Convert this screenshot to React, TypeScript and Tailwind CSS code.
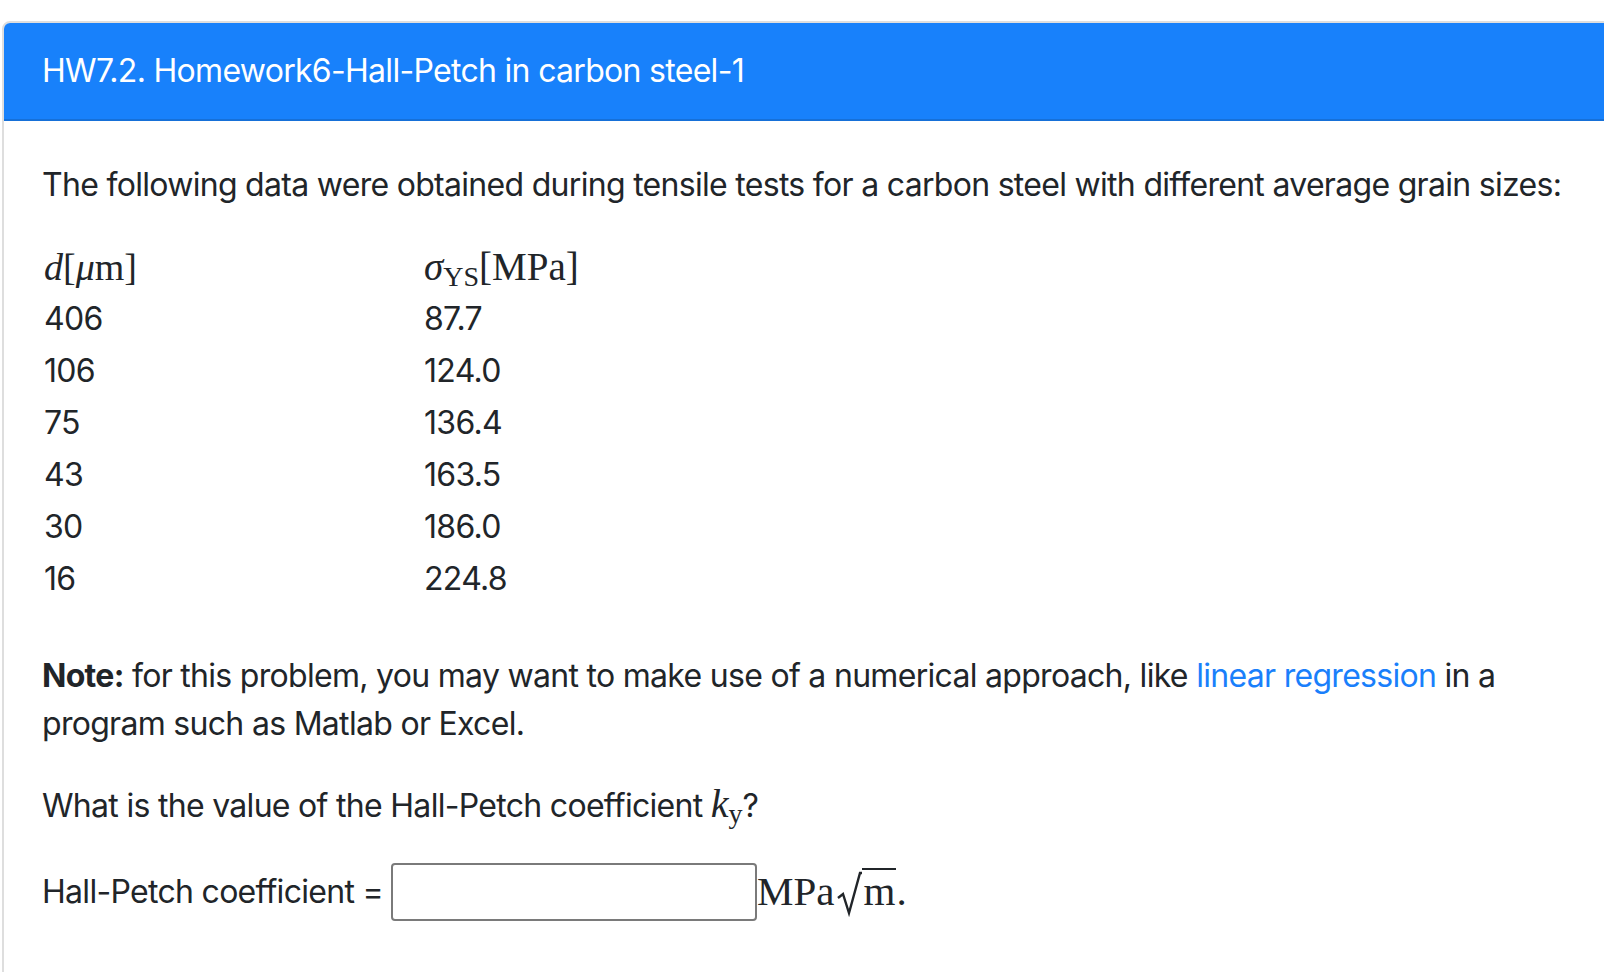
import React from 'react';

const rows: [string, string][] = [
  ['406', '87.7'],
  ['106', '124.0'],
  ['75', '136.4'],
  ['43', '163.5'],
  ['30', '186.0'],
  ['16', '224.8'],
];

const serif = "font-['Liberation_Serif','Times_New_Roman',serif] tracking-normal";

function Radical() {
  return (
    <svg width="26" height="46" viewBox="0 0 26 46" className="inline-block align-[-12px] ml-[2px]">
      <path d="M2 27 L7 23 L13 42 L24 2 L26 2" fill="none" stroke="#212529" strokeWidth="2.4" strokeLinejoin="miter" />
    </svg>
  );
}

export default function App() {
  return (
    <div className="w-full h-[972px] overflow-hidden bg-white pt-[21px] font-['Inter','Helvetica_Neue','Liberation_Sans',sans-serif] text-[32px] leading-[48px] tracking-[-0.7px] text-[#212529]">
      <div className="ml-[2px] w-[1660px] border-2 border-[#dedede] rounded-[8px] overflow-hidden">
        <div className="bg-[#1881fb] border-b-2 border-[#1670d8] px-[38px] py-[24px] text-white">
          HW7.2. Homework6-Hall-Petch in carbon steel-1
        </div>
        <div className="w-[1602px] px-[38px] pt-[40px] pb-[60px]">
          <p className="mb-[32px] whitespace-nowrap">
            The following data were obtained during tensile tests for a carbon steel with different average grain sizes:
          </p>
          <table className="mb-[47px] border-collapse">
            <thead>
              <tr className="h-[52px]">
                <th className={`w-[380px] text-left font-normal px-[2px] ${serif} text-[38px]`}>
                  <i>d</i>[<i>μ</i>m]
                </th>
                <th className={`text-left font-normal px-[2px] ${serif} text-[39px]`}>
                  <i>σ</i>
                  <sub className="text-[28px] bottom-[-6px]">YS</sub>
                  [MPa]
                </th>
              </tr>
            </thead>
            <tbody>
              {rows.map(([d, s]) => (
                <tr key={d} className="h-[52px]">
                  <td className="px-[2px]">{d}</td>
                  <td className="px-[2px]">{s}</td>
                </tr>
              ))}
            </tbody>
          </table>
          <p className="mb-[32px]">
            <b>Note:</b> for this problem, you may want to make use of a numerical approach, like{' '}
            <a className="text-[#1a7ffb]" href="#">linear regression</a> in a program such as Matlab or Excel.
          </p>
          <p className="mb-[32px]">
            What is the value of the Hall-Petch coefficient{' '}
            <span className={`${serif} text-[40px]`}>
              <i>k</i>
              <sub className="text-[28px] bottom-[-6px]">y</sub>
            </span>
            ?
          </p>
          <div className="flex items-center h-[59px]">
            <span>Hall-Petch coefficient =</span>
            <div className="ml-[8px] w-[366px] h-[58px] border-2 border-[#7a7a7a] rounded-[4px] bg-white" />
            <span className={`${serif} text-[41px] whitespace-nowrap tracking-[0.5px]`}>
              MPa<Radical /><span className="border-t-2 border-[#212529] inline-block leading-[36px] pt-[3px] px-[1px]">m</span>.
            </span>
          </div>
        </div>
      </div>
    </div>
  );
}
